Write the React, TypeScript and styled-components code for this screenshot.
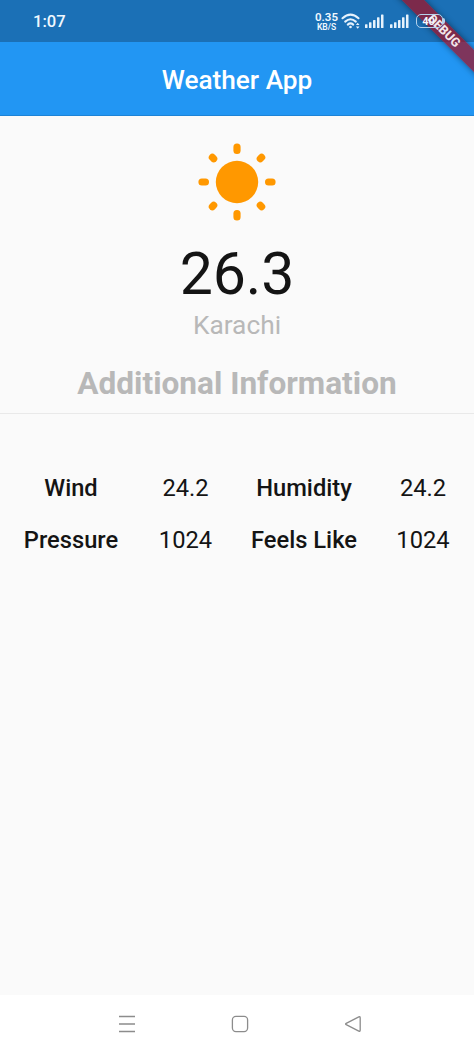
import React from "react";
import styled, { createGlobalStyle } from "styled-components";

const GlobalStyle = createGlobalStyle`
  * { box-sizing: border-box; }
  body { margin: 0; background: #fafafa; font-family: Roboto, "Liberation Sans", sans-serif; }
`;

const Screen = styled.div`
  position: relative;
  display: flex;
  flex-direction: column;
  width: 474px;
  height: 1053px;
  overflow: hidden;
  background: #fafafa;
  color: #141414;
`;

const StatusBar = styled.header`
  display: flex;
  align-items: center;
  justify-content: space-between;
  height: 42px;
  padding: 0 29px 0 33px;
  background: #1b70b6;
  color: #f0f8ff;
`;

const Clock = styled.span`
  padding-top: 2px;
  font-size: 16.6px;
  font-weight: 500;
  line-height: 20px;
`;

const StatusIcons = styled.div`
  position: relative;
  z-index: 2;
  display: flex;
  align-items: center;
`;

const NetSpeed = styled.div`
  display: flex;
  flex-direction: column;
  align-items: center;
  width: 23px;
  margin-right: 3px;
  font-weight: 600;
  font-size: 11.5px;
  line-height: 11px;
`;

const NetUnit = styled.span`
  font-size: 8.5px;
  line-height: 8px;
`;

const AppBar = styled.div`
  display: flex;
  align-items: center;
  justify-content: center;
  height: 74px;
  padding-top: 3px;
  background: #2296f3;
  border-bottom: 1px solid #1d83d6;
`;

const Title = styled.h1`
  margin: 0;
  color: #fff;
  font-size: 26.2px;
  font-weight: 500;
`;

const Main = styled.main`
  flex: 1;
  display: flex;
  flex-direction: column;
  align-items: center;
`;

const Sun = styled.svg`
  display: block;
  width: 80px;
  height: 80px;
  margin-top: 26px;
`;

const Temperature = styled.div`
  margin-top: 16px;
  font-size: 59px;
  line-height: 72px;
  letter-spacing: -0.1px;
`;

const City = styled.div`
  color: #b8b8b8;
  font-size: 26.3px;
  line-height: 30px;
`;

const SectionTitle = styled.h2`
  margin: 24px 0 0;
  color: #b8b8b8;
  font-size: 31.6px;
  font-weight: 700;
  line-height: 40px;
`;

const Divider = styled.hr`
  width: 100%;
  height: 1px;
  margin: 9px 0 0;
  border: 0;
  background: #e9e9e9;
`;

const Readings = styled.dl`
  display: grid;
  grid-template-columns: 142px 87px 150px 88px;
  grid-auto-rows: 51px;
  row-gap: 1px;
  align-items: center;
  justify-items: center;
  width: 100%;
  margin: 48px 0 0;
  font-size: 23.7px;
`;

const Label = styled.dt`
  font-weight: 500;
`;

const Value = styled.dd`
  margin: 0;
`;

const NavBar = styled.nav`
  display: grid;
  grid-template-columns: repeat(3, 113px);
  justify-content: center;
  justify-items: center;
  align-items: center;
  height: 58px;
  padding: 0 0 0 5px;
  background: #fff;
`;

const BannerClip = styled.div`
  position: absolute;
  top: 0;
  right: 0;
  width: 100px;
  height: 100px;
  overflow: hidden;
`;

const Banner = styled.div`
  position: absolute;
  left: 9.5px;
  top: 23px;
  width: 120px;
  height: 16px;
  transform: rotate(45deg);
  background: rgba(160, 17, 36, 0.73);
  box-shadow: 0 0 6px rgba(0, 0, 0, 0.45);
  color: #f3e6ea;
  font-size: 12.6px;
  font-weight: 800;
  line-height: 16px;
  text-align: center;
`;

const rays = [0, 45, 90, 135, 180, 225, 270, 315];

const readings = [
  ["Wind", "24.2"],
  ["Humidity", "24.2"],
  ["Pressure", "1024"],
  ["Feels Like", "1024"],
];

function WifiIcon() {
  return (
    <svg width="20" height="16" viewBox="0 0 20 16" fill="none" stroke="#e6f2fc" strokeWidth="2.1" strokeLinecap="round">
      <path d="M1.5 5.2 Q9.5 -2 17.5 5.2" />
      <path d="M4.2 8.6 Q9.5 3.9 14.8 8.6" />
      <path d="M6.8 11.6 Q9.5 9.3 12.2 11.6" />
      <circle cx="9.5" cy="14" r="1.3" fill="#e6f2fc" stroke="none" />
      <path d="M14.9 12 L16.7 9.7 L18.5 12Z M14.9 13.4 L16.7 15.7 L18.5 13.4Z" fill="#e6f2fc" stroke="none" />
    </svg>
  );
}

const Signal = styled.svg`
  display: block;
  margin-left: 4px;
`;

function SignalIcon() {
  return (
    <Signal width="21" height="14" viewBox="0 0 21 14" fill="#e6f2fc">
      <rect x="0" y="10.2" width="2.5" height="3.8" rx=".6" />
      <rect x="4" y="8.2" width="2.5" height="5.8" rx=".6" />
      <rect x="8" y="5.9" width="2.5" height="8.1" rx=".6" />
      <rect x="12" y="3.2" width="2.5" height="10.8" rx=".6" />
      <rect x="16" y="0.4" width="2.5" height="13.6" rx=".6" />
    </Signal>
  );
}

const Battery = styled.div`
  display: flex;
  align-items: center;
  justify-content: center;
  width: 27px;
  height: 14px;
  margin-left: 5px;
  padding-right: 2px;
  border: 1.5px solid #b5d2eb;
  border-radius: 5px;
  font-size: 11px;
  font-weight: 700;
`;

const BatteryTip = styled.span`
  width: 2px;
  height: 6px;
  border-radius: 0 2px 2px 0;
  background: #b5d2eb;
`;

export default function App() {
  return (
    <Screen>
      <GlobalStyle />
      <StatusBar>
        <Clock>1:07</Clock>
        <StatusIcons>
          <NetSpeed>
            <span>0.35</span>
            <NetUnit>KB/S</NetUnit>
          </NetSpeed>
          <WifiIcon />
          <SignalIcon />
          <SignalIcon />
          <Battery>40</Battery>
          <BatteryTip />
        </StatusIcons>
      </StatusBar>
      <AppBar>
        <Title>Weather App</Title>
      </AppBar>
      <Main>
        <Sun viewBox="-40 -40 80 80" fill="#ff9800">
          <circle r="21.2" />
          {rays.map((angle) => {
            const diagonal = angle % 90 !== 0;
            return (
              <rect
                key={angle}
                x="-3.6"
                y={diagonal ? -38.4 : -38.6}
                width="7.2"
                height={diagonal ? 9 : 10.6}
                rx="3.5"
                transform={`rotate(${angle})`}
              />
            );
          })}
        </Sun>
        <Temperature>26.3</Temperature>
        <City>Karachi</City>
        <SectionTitle>Additional Information</SectionTitle>
        <Divider />
        <Readings>
          {readings.map(([label, value]) => (
            <React.Fragment key={label}>
              <Label>{label}</Label>
              <Value>{value}</Value>
            </React.Fragment>
          ))}
        </Readings>
      </Main>
      <NavBar>
        <svg width="18" height="18" viewBox="0 0 18 18" stroke="#8c8c8c" strokeWidth="1.3">
          <path d="M1 1.5H17M1 9H17M1 16.5H17" />
        </svg>
        <svg width="18" height="18" viewBox="0 0 18 18" fill="none" stroke="#8c8c8c" strokeWidth="1.3">
          <rect x="1.4" y="1.4" width="15.2" height="15.2" rx="3.5" />
        </svg>
        <svg width="18" height="18" viewBox="0 0 18 18" fill="none" stroke="#8c8c8c" strokeWidth="1.3" strokeLinejoin="round">
          <path d="M2.2 8.3 L14.8 1.9 Q16.2 1.4 16.2 2.9 V15.1 Q16.2 16.6 14.8 16.1 L2.2 9.7 Q1 9 2.2 8.3Z" />
        </svg>
      </NavBar>
      <BannerClip>
        <Banner>DEBUG</Banner>
      </BannerClip>
    </Screen>
  );
}
